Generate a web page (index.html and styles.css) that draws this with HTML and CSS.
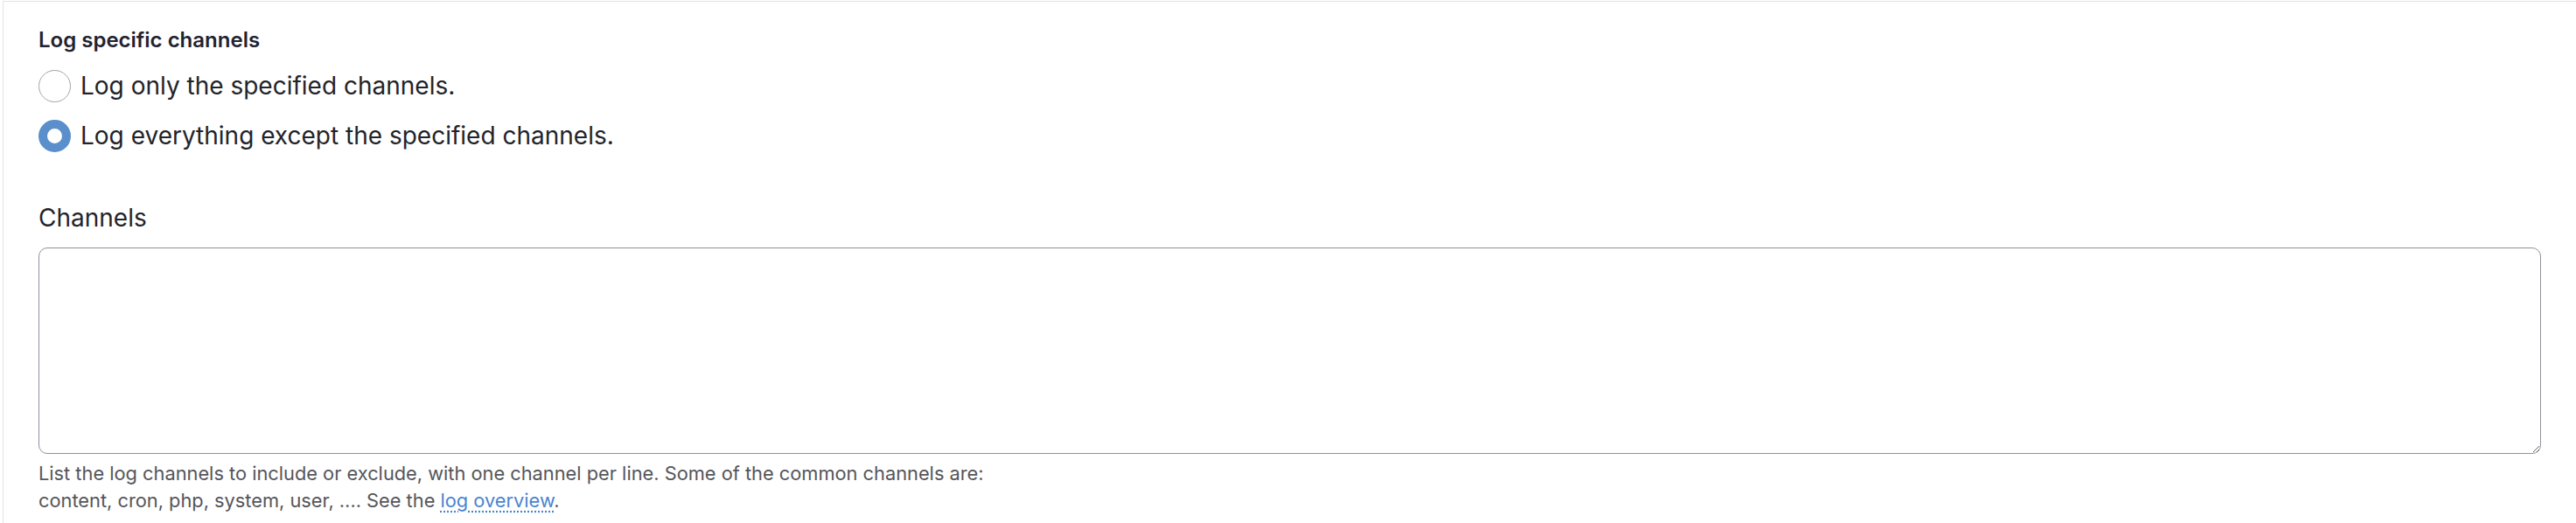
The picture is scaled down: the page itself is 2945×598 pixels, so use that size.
FILE: index.html
```html
<!DOCTYPE html>
<html lang="en">
<head>
<meta charset="utf-8">
<title>Log specific channels</title>
<link rel="stylesheet" href="styles.css">
</head>
<body>
<div class="panel">
  <fieldset class="radios">
    <legend class="legend">Log specific channels</legend>
    <label class="option">
      <input class="radio" type="radio" name="mode" value="only">
      <span class="option-text">Log only the specified channels.</span>
    </label>
    <label class="option">
      <input class="radio" type="radio" name="mode" value="except" checked>
      <span class="option-text">Log everything except the specified channels.</span>
    </label>
  </fieldset>
  <div class="field">
    <label class="field-label" for="channels">Channels</label>
    <textarea class="textarea" id="channels"></textarea>
    <div class="description">List the log channels to include or exclude, with one channel per line. Some of the common channels are:<br>content, cron, php, system, user, .... See the <a class="link" href="#">log overview</a>.</div>
  </div>
</div>
</body>
</html>
```
FILE: styles.css
```css
html, body {
  margin: 0;
  padding: 0;
  background: #ffffff;
}
body {
  font-family: Inter, "Noto Sans", sans-serif;
  color: #232429;
}
.panel {
  margin: 1px 0 0 3px;
  border-top: 1px solid #e3e3e6;
  border-left: 1px solid #e3e3e6;
  padding: 29px 40px 0 40px;
  height: 597px;
  box-sizing: border-box;
  overflow: hidden;
}
.radios {
  margin: 0;
  padding: 0;
  border: 0;
  min-width: 0;
}
.legend {
  padding: 0;
  font-size: 24px;
  line-height: 30px;
  font-weight: 600;
  color: #222330;
}
.option {
  display: flex;
  align-items: center;
  gap: 11px;
  height: 36px;
  margin-top: 19px;
  cursor: pointer;
}
.option + .option {
  margin-top: 21px;
}
.radio {
  appearance: none;
  -webkit-appearance: none;
  margin: 0;
  width: 37px;
  height: 37px;
  flex: none;
  border-radius: 50%;
  border: 1px solid #a2a4ab;
  background: #ffffff;
  box-sizing: border-box;
}
.radio:checked {
  border: 10px solid #5b8fcb;
  background: #ffffff;
}
.option-text {
  font-size: 28px;
  line-height: 36px;
  color: #232429;
}
.field {
  margin-top: 59px;
  display: flex;
  flex-direction: column;
}
.field-label {
  font-size: 28px;
  line-height: 34px;
  color: #232429;
  margin-bottom: 17px;
}
.textarea {
  display: block;
  width: 100%;
  height: 236px;
  box-sizing: border-box;
  border: 1px solid #8e929c;
  border-radius: 10px;
  background: #ffffff;
  margin: 0;
  padding: 10px 14px;
  font-family: Inter, sans-serif;
  font-size: 24px;
}
.description {
  margin-top: 7px;
  font-size: 21.8px;
  line-height: 31px;
  color: #55565b;
}
.link {
  color: #4a85cf;
  text-decoration: underline dotted;
  text-underline-offset: 4px;
}
```
